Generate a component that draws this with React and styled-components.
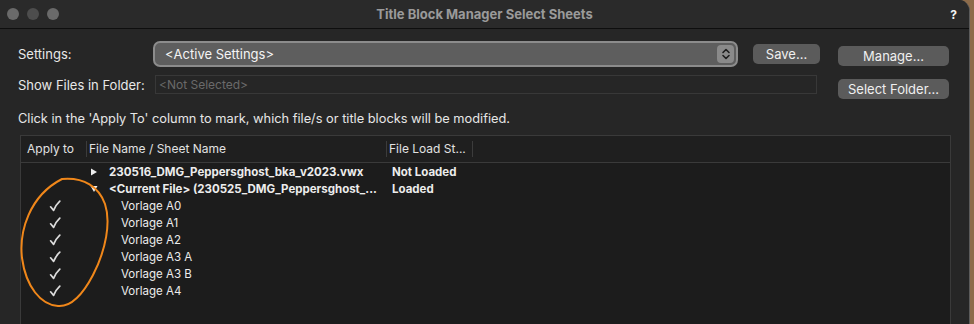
import styled, { createGlobalStyle } from "styled-components";

const GlobalStyle = createGlobalStyle`
  html, body {
    margin: 0;
    padding: 0;
    background: #8d6b4a;
    overflow: hidden;
  }
  body {
    font-family: Inter, "Liberation Sans", sans-serif;
    -webkit-font-smoothing: antialiased;
  }
`;

const sheets = ["Vorlage A0", "Vorlage A1", "Vorlage A2", "Vorlage A3 A", "Vorlage A3 B", "Vorlage A4"];

const Check = () => (
  <svg width="12" height="12" viewBox="0 0 12 12">
    <path d="M1.6 6.8 L4.6 10.4 C6.2 6.6 8.2 3.6 10.8 1.2" fill="none" stroke="#dcdcdc" strokeWidth="1.7" strokeLinecap="round" strokeLinejoin="round" />
  </svg>
);

const App = () => {
  return (
    <>
      <GlobalStyle />
      <Window>
        <TitleBar>
          <Lights>
            <Light />
            <Light dim />
            <Light />
          </Lights>
          <Title>Title Block Manager Select Sheets</Title>
          <Help>?</Help>
        </TitleBar>

        <Content>
          <Form>
            <Label tall>Settings:</Label>
            <FieldRow>
              <Popup>
                <PopupText>&lt;Active Settings&gt;</PopupText>
                <Stepper>
                  <svg width="10" height="14" viewBox="0 0 10 14">
                    <path d="M2 5.5 L5 2.5 L8 5.5 M2 8.5 L5 11.5 L8 8.5" fill="none" stroke="#1e1e1e" strokeWidth="1.6" strokeLinecap="round" strokeLinejoin="round" />
                  </svg>
                </Stepper>
              </Popup>
              <Button width={67}>Save...</Button>
            </FieldRow>
            <Button width={111} shift={5}>Manage...</Button>

            <Label>Show Files in Folder:</Label>
            <TextField>&lt;Not Selected&gt;</TextField>
            <Button width={111} shift={4}>Select Folder...</Button>
          </Form>

          <Hint>Click in the 'Apply To' column to mark, which file/s or title blocks will be modified.</Hint>

          <Table>
            <Header>
              <HeadCell>Apply to</HeadCell>
              <HeadCell divider>File Name / Sheet Name</HeadCell>
              <HeadCell divider>File Load St...</HeadCell>
              <HeadCell divider />
            </Header>

            <Row>
              <ApplyCell />
              <NameCell bold>
                <Disclosure>
                  <svg width="8" height="8" viewBox="0 0 8 8"><polygon points="1,0.5 7,4 1,7.5" fill="#eee" /></svg>
                </Disclosure>
                230516_DMG_Peppersghost_bka_v2023.vwx
              </NameCell>
              <StatusCell>Not Loaded</StatusCell>
            </Row>
            <Row>
              <ApplyCell />
              <NameCell bold>
                <Disclosure>
                  <svg width="8" height="8" viewBox="0 0 8 8"><polygon points="0.5,1 7.5,1 4,7" fill="#eee" /></svg>
                </Disclosure>
                &lt;Current File&gt; (230525_DMG_Peppersghost_...
              </NameCell>
              <StatusCell>Loaded</StatusCell>
            </Row>
            {sheets.map((name) => (
              <Row key={name}>
                <ApplyCell><Check /></ApplyCell>
                <NameCell indent>{name}</NameCell>
                <StatusCell />
              </Row>
            ))}
          </Table>
        </Content>

        <Scribble width="974" height="324" viewBox="0 0 974 324">
          <path
            d="M62 179 C84 177 99 187 105 204 C111 222 106 250 93 275 C82 296 70 307 58 306 C41 305 26 287 22 258 C19 232 29 196 62 179 Z"
            fill="none"
            stroke="#f0871a"
            strokeWidth="2"
          />
        </Scribble>
      </Window>
    </>
  );
};

const Window = styled.div`
  width: 969px;
  height: 324px;
  background: #262626;
  border-right: 1px solid #5a5a5a;
  border-top-right-radius: 11px;
  display: flex;
  flex-direction: column;
  overflow: hidden;
  position: relative;
`;

const TitleBar = styled.div`
  height: 28px;
  flex: none;
  background: #2a2a2a;
  border-bottom: 1px solid #0e0e0e;
  display: grid;
  grid-template-columns: 200px 1fr 200px;
  align-items: center;
`;

const Lights = styled.div`
  display: flex;
  gap: 8px;
  padding-left: 7px;
`;

const Light = styled.span`
  width: 12px;
  height: 12px;
  border-radius: 50%;
  background: ${(p) => (p.dim ? "#4d4d4d" : "#6a6a6a")};
`;

const Title = styled.div`
  text-align: center;
  color: #9a9a9a;
  font-weight: 700;
  font-size: 13px;
`;

const Help = styled.div`
  text-align: right;
  padding-right: 12px;
  color: #f2f2f2;
  font-weight: 700;
  font-size: 12px;
`;

const Content = styled.div`
  flex: 1;
  padding: 12px 0 0 18px;
  display: flex;
  flex-direction: column;
`;

const Form = styled.div`
  display: grid;
  grid-template-columns: 117px 667px 111px;
  column-gap: 18px;
  row-gap: 7px;
  align-items: start;
`;

const Label = styled.div`
  color: #e8e8e8;
  font-size: 13px;
  line-height: ${(p) => (p.tall ? "27px" : "20px")};
  white-space: nowrap;
`;

const FieldRow = styled.div`
  display: flex;
  align-items: center;
  gap: 15px;
`;

const Popup = styled.div`
  width: 585px;
  height: 26px;
  border: 2px solid #8c8c8c;
  border-radius: 7px;
  background: #5e5e5e;
  display: flex;
  align-items: center;
  justify-content: space-between;
  padding: 0 2px 0 10px;
  box-sizing: border-box;
`;

const PopupText = styled.span`
  color: #f4f4f4;
  font-size: 13px;
`;

const Stepper = styled.span`
  width: 17px;
  height: 18px;
  border-radius: 4px;
  background: #8a8a8a;
  display: flex;
  align-items: center;
  justify-content: center;
`;

const Button = styled.div`
  width: ${(p) => p.width}px;
  height: 20px;
  margin-top: ${(p) => p.shift || 0}px;
  box-sizing: border-box;
  border-radius: 5px;
  background: #5b5b5b;
  color: #efefef;
  font-size: 13px;
  display: flex;
  align-items: center;
  justify-content: center;
`;

const TextField = styled.div`
  margin: 0 3px 0 2px;
  height: 19px;
  box-sizing: border-box;
  border: 1px solid #383838;
  background: #262626;
  color: #6a6a6a;
  font-size: 12px;
  padding-left: 3px;
  display: flex;
  align-items: center;
`;

const Hint = styled.div`
  margin-top: 12px;
  color: #e6e6e6;
  font-size: 12.8px;
  height: 16px;
  line-height: 16px;
`;

const Table = styled.div`
  margin: 8px 0 0 2px;
  width: 931px;
  flex: 1;
  box-sizing: border-box;
  border: 1px solid #3a3a3a;
  border-bottom: none;
  background: #1c1c1c;
  display: flex;
  flex-direction: column;
`;

const columns = "65px 300px 86px 1fr";

const Header = styled.div`
  height: 26px;
  flex: none;
  display: grid;
  grid-template-columns: ${columns};
  align-items: center;
  background: #1f1f1f;
  border-bottom: 1px solid #3a3a3a;
`;

const HeadCell = styled.div`
  color: #e2e2e2;
  font-size: 12px;
  height: 16px;
  line-height: 16px;
  padding-left: ${(p) => (p.divider ? "2px" : "6px")};
  border-left: ${(p) => (p.divider ? "1px solid #3c3c3c" : "none")};
  white-space: nowrap;
`;

const Row = styled.div`
  height: 17px;
  display: grid;
  grid-template-columns: ${columns};
  align-items: center;
  font-size: 11.5px;
  color: #ececec;
`;

const ApplyCell = styled.div`
  display: flex;
  align-items: center;
  height: 17px;
  padding-left: 28px;
`;

const NameCell = styled.div`
  display: flex;
  align-items: center;
  font-weight: ${(p) => (p.bold ? 700 : 400)};
  padding-left: ${(p) => (p.indent ? "35px" : "4px")};
  white-space: nowrap;
  overflow: hidden;
`;

const Disclosure = styled.span`
  width: 19px;
  display: flex;
  align-items: center;
`;

const StatusCell = styled.div`
  font-weight: 700;
  padding-left: 6px;
  white-space: nowrap;
`;

const Scribble = styled.svg`
  position: absolute;
  left: 0;
  top: 0;
  pointer-events: none;
`;

export default App;
